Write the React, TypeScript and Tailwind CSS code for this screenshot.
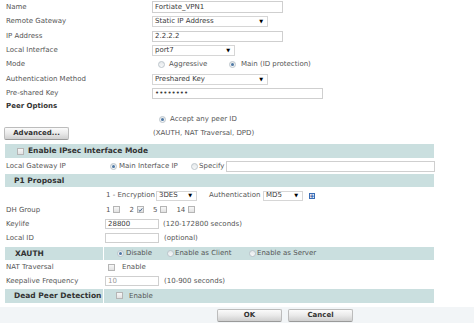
import React from 'react';

const Radio = ({ checked = false }: { checked?: boolean }) => (
    <span className="inline-flex items-center justify-center w-[7px] h-[7px] rounded-full border border-[#bcc5cb] bg-gradient-to-b from-[#e4e8ea] to-[#f7f8f9] shrink-0">
        {checked && <span className="w-[3px] h-[3px] rounded-full bg-[#4f78a4]"></span>}
    </span>
);

const Check = ({ checked = false }: { checked?: boolean }) => (
    <span className="inline-flex items-center justify-center w-[7px] h-[7px] border border-[#b5b5b5] bg-gradient-to-b from-[#f7f7f7] to-[#e2e2e2] shrink-0">
        {checked && (
            <svg width="6" height="6" viewBox="0 0 6 6">
                <path d="M0.8 3 L2.4 4.6 L5.2 1" fill="none" stroke="#3c5f8c" strokeWidth="1.1" />
            </svg>
        )}
    </span>
);

const TextBox = ({ value = '', w, h = 'h-[11px]', muted = false }: { value?: string; w: string; h?: string; muted?: boolean }) => (
    <div className={`${w} ${h} border border-[#cfcfcf] bg-white flex items-center pl-[2px] ${muted ? 'text-[#999]' : 'text-[#3a3a3a]'}`}>
        {value}
    </div>
);

const Select = ({ value, w, h = 'h-[11px]' }: { value: string; w: string; h?: string }) => (
    <div className={`${w} ${h} border border-[#d6d6d6] bg-white flex items-center justify-between pl-[2px] pr-[4px] text-[#3a3a3a]`}>
        <span>{value}</span>
        <span className="text-[5px] text-black">▼</span>
    </div>
);

const Btn = ({ label, w }: { label: string; w: string }) => (
    <div className={`${w} h-[13px] flex items-center justify-center rounded-[2px] border border-[#bcbcbc] border-b-[#9a9a9a] bg-gradient-to-b from-[#fbfbfb] via-[#e9e9e9] to-[#cfcfcf] font-bold text-[#333]`}>
        {label}
    </div>
);

export default function App() {
    return (
        <div className="w-[474px] h-[332px] overflow-hidden bg-white font-['DejaVu_Sans',sans-serif] text-[7px] leading-none text-[#555]">
            {/* Phase 1 basic settings */}
            <div className="flex items-center h-[14px]">
                <div className="w-[152px] pl-[6px]">Name</div>
                <TextBox value="Fortiate_VPN1" w="w-[131px]" h="h-[12px]" />
            </div>
            <div className="flex items-center h-[15px]">
                <div className="w-[152px] pl-[6px]">Remote Gateway</div>
                <Select value="Static IP Address" w="w-[116px]" />
            </div>
            <div className="flex items-center h-[15px]">
                <div className="w-[152px] pl-[6px]">IP Address</div>
                <TextBox value="2.2.2.2" w="w-[131px]" />
            </div>
            <div className="flex items-center h-[13px]">
                <div className="w-[152px] pl-[6px]">Local Interface</div>
                <Select value="port7" w="w-[83px]" />
            </div>
            <div className="flex items-center h-[15px]">
                <div className="w-[158px] pl-[6px]">Mode</div>
                <Radio />
                <span className="ml-[4px] w-[60px]">Aggressive</span>
                <Radio checked />
                <span className="ml-[5px]">Main (ID protection)</span>
            </div>
            <div className="flex items-center h-[15px]">
                <div className="w-[152px] pl-[6px]">Authentication Method</div>
                <Select value="Preshared Key" w="w-[116px]" />
            </div>
            <div className="flex items-center h-[13px]">
                <div className="w-[152px] pl-[6px]">Pre-shared Key</div>
                <TextBox value="••••••••" w="w-[171px]" />
            </div>
            <div className="flex items-center h-[12px] pl-[6px] font-bold text-[#333]">Peer Options</div>
            <div className="flex items-center h-[14px] pl-[159px]">
                <Radio checked />
                <span className="ml-[4px]">Accept any peer ID</span>
            </div>
            <div className="flex items-center h-[14px]">
                <div className="w-[153px] pl-[4px]">
                    <Btn label="Advanced..." w="w-[65px]" />
                </div>
                <span>(XAUTH, NAT Traversal, DPD)</span>
            </div>

            {/* IPsec interface mode */}
            <div className="mt-[4px] ml-[5px] w-[429px] h-[14px] bg-[#cadfdf] flex items-center pl-[12px] font-bold text-[#333] text-[7.5px]">
                <Check />
                <span className="ml-[4px]">Enable IPsec Interface Mode</span>
            </div>
            <div className="flex items-center h-[16px]">
                <div className="w-[110px] pl-[6px]">Local Gateway IP</div>
                <Radio checked />
                <span className="ml-[2px] w-[72px]">Main Interface IP</span>
                <Radio />
                <span className="ml-[1px] w-[27px]">Specify</span>
                <TextBox w="w-[209px]" />
            </div>

            {/* P1 proposal */}
            <div className="ml-[5px] w-[429px] h-[13px] bg-[#cadfdf] flex items-center pl-[9px] font-bold text-[#333] text-[7.5px]">
                P1 Proposal
            </div>
            <div className="flex items-center h-[17px] pl-[106px]">
                <span className="w-[50px]">1 - Encryption</span>
                <Select value="3DES" w="w-[41px]" h="h-[10px]" />
                <span className="ml-[12px] w-[54px]">Authentication</span>
                <Select value="MD5" w="w-[40px]" h="h-[10px]" />
                <span className="ml-[6px] w-[6px] h-[6px] border border-[#3b6db5] bg-[#dfe9f7] flex items-center justify-center text-[6px] font-bold text-[#1f4f9a]">+</span>
            </div>
            <div className="flex items-center h-[13px]">
                <div className="w-[106px] pl-[6px]">DH Group</div>
                <span>1</span>
                <span className="ml-[3px]"><Check /></span>
                <span className="ml-[9px]">2</span>
                <span className="ml-[3px]"><Check checked /></span>
                <span className="ml-[9px]">5</span>
                <span className="ml-[3px]"><Check /></span>
                <span className="ml-[9px]">14</span>
                <span className="ml-[3px]"><Check /></span>
            </div>
            <div className="flex items-center h-[14px]">
                <div className="w-[105px] pl-[6px]">Keylife</div>
                <TextBox value="28800" w="w-[54px]" h="h-[10px]" />
                <span className="ml-[4px]">(120-172800 seconds)</span>
            </div>
            <div className="flex items-center h-[14px]">
                <div className="w-[105px] pl-[6px]">Local ID</div>
                <TextBox w="w-[54px]" h="h-[10px]" />
                <span className="ml-[5px]">(optional)</span>
            </div>

            {/* XAUTH */}
            <div className="mt-[2px] ml-[5px] w-[429px] h-[13px] bg-[#cadfdf] flex items-center">
                <div className="w-[99px] h-full flex items-center pl-[10px] font-bold text-[#333] text-[7.5px] border-r border-white">XAUTH</div>
                <span className="ml-[13px]"><Radio checked /></span>
                <span className="ml-[2px] w-[41px]">Disable</span>
                <Radio />
                <span className="ml-[1px] w-[74px]">Enable as Client</span>
                <Radio />
                <span className="ml-[1px]">Enable as Server</span>
            </div>
            <div className="flex items-center h-[14px]">
                <div className="w-[108px] pl-[6px]">NAT Traversal</div>
                <Check />
                <span className="ml-[7px]">Enable</span>
            </div>
            <div className="flex items-center h-[14px]">
                <div className="w-[105px] pl-[6px]">Keepalive Frequency</div>
                <TextBox value="10" w="w-[54px]" h="h-[10px]" muted />
                <span className="ml-[5px]">(10-900 seconds)</span>
            </div>

            {/* Dead peer detection */}
            <div className="mt-[1px] ml-[5px] w-[429px] h-[14px] bg-[#cadfdf] flex items-center">
                <div className="w-[99px] h-full flex items-center pl-[9px] font-bold text-[#333] text-[7.5px] border-r border-white">Dead Peer Detection</div>
                <span className="ml-[12px]"><Check /></span>
                <span className="ml-[6px]">Enable</span>
            </div>

            {/* Footer buttons */}
            <div className="mt-[4px] h-[16px] bg-[#f2f5f7] flex items-center pl-[217px] gap-[6px]">
                <Btn label="OK" w="w-[65px]" />
                <Btn label="Cancel" w="w-[65px]" />
            </div>
        </div>
    );
}
